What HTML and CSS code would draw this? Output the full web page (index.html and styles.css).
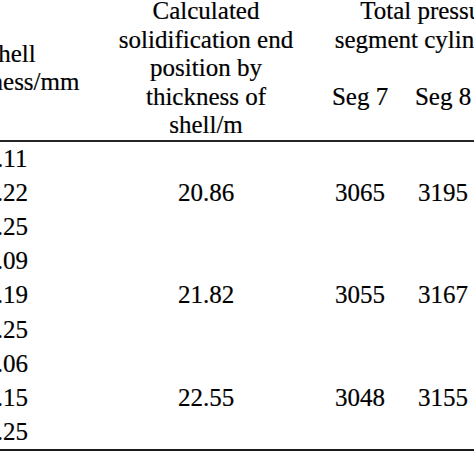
FILE: index.html
```html
<!DOCTYPE html>
<html>
<head>
<meta charset="utf-8">
<link rel="stylesheet" href="styles.css">
</head>
<body>
<div class="clip">
<table class="data">
<colgroup>
<col class="c1"><col class="c2"><col class="c3"><col class="c4"><col class="c5">
</colgroup>
<thead>
<tr class="ha">
<th rowspan="2" class="mid">Shell<br>thickness/mm</th>
<th rowspan="2" class="mid">Calculated<br>solidification end<br>position by<br>thickness of<br>shell/m</th>
<th colspan="3" class="top">Total pressure of<br>segment cylinders/kN</th>
</tr>
<tr class="hb">
<th class="top">Seg 7</th>
<th class="top">Seg 8</th>
<th class="top">Seg 9</th>
</tr>
</thead>
<tbody>
<tr><td class="t">0.11</td><td rowspan="3">20.86</td><td rowspan="3">3065</td><td rowspan="3">3195</td><td rowspan="3">3301</td></tr>
<tr><td class="t">0.22</td></tr>
<tr><td class="t">0.25</td></tr>
<tr><td class="t">0.09</td><td rowspan="3">21.82</td><td rowspan="3">3055</td><td rowspan="3">3167</td><td rowspan="3">3289</td></tr>
<tr><td class="t">0.19</td></tr>
<tr><td class="t">0.25</td></tr>
<tr><td class="t">0.06</td><td rowspan="3">22.55</td><td rowspan="3">3048</td><td rowspan="3">3155</td><td rowspan="3">3270</td></tr>
<tr><td class="t">0.15</td></tr>
<tr><td class="t">0.25</td></tr>
</tbody>
</table>
</div>
</body>
</html>
```
FILE: styles.css
```css
html, body {
  margin: 0;
  padding: 0;
  background: #ffffff;
}
.clip {
  width: 474px;
  height: 474px;
  overflow: hidden;
}
.data {
  margin-left: -70px;
  margin-top: -3px;
  border-collapse: collapse;
  table-layout: fixed;
  width: 636px;
  font-family: "Liberation Serif", "Times New Roman", serif;
  font-size: 25px;
  color: #000000;
  -webkit-text-stroke: 0.2px #000000;
}
.c1 { width: 160px; }
.c2 { width: 232px; }
.c3 { width: 76px; }
.c4 { width: 90px; }
.c5 { width: 78px; }
.data th, .data td {
  padding: 0;
  text-align: center;
  font-weight: normal;
  white-space: nowrap;
}
.data th {
  line-height: 28.5px;
}
.data th.mid { vertical-align: middle; }
.data th.top { vertical-align: top; }
.ha { height: 85.5px; }
.hb { height: 57px; }
.data thead {
  border-bottom: 2px solid #262626;
}
.data tbody {
  border-bottom: 2px solid #1a1a1a;
}
.data tbody tr {
  height: 34.2px;
}
.data td {
  line-height: 34.2px;
  vertical-align: middle;
}
.data td.t {
  padding-right: 8px;
}
```
